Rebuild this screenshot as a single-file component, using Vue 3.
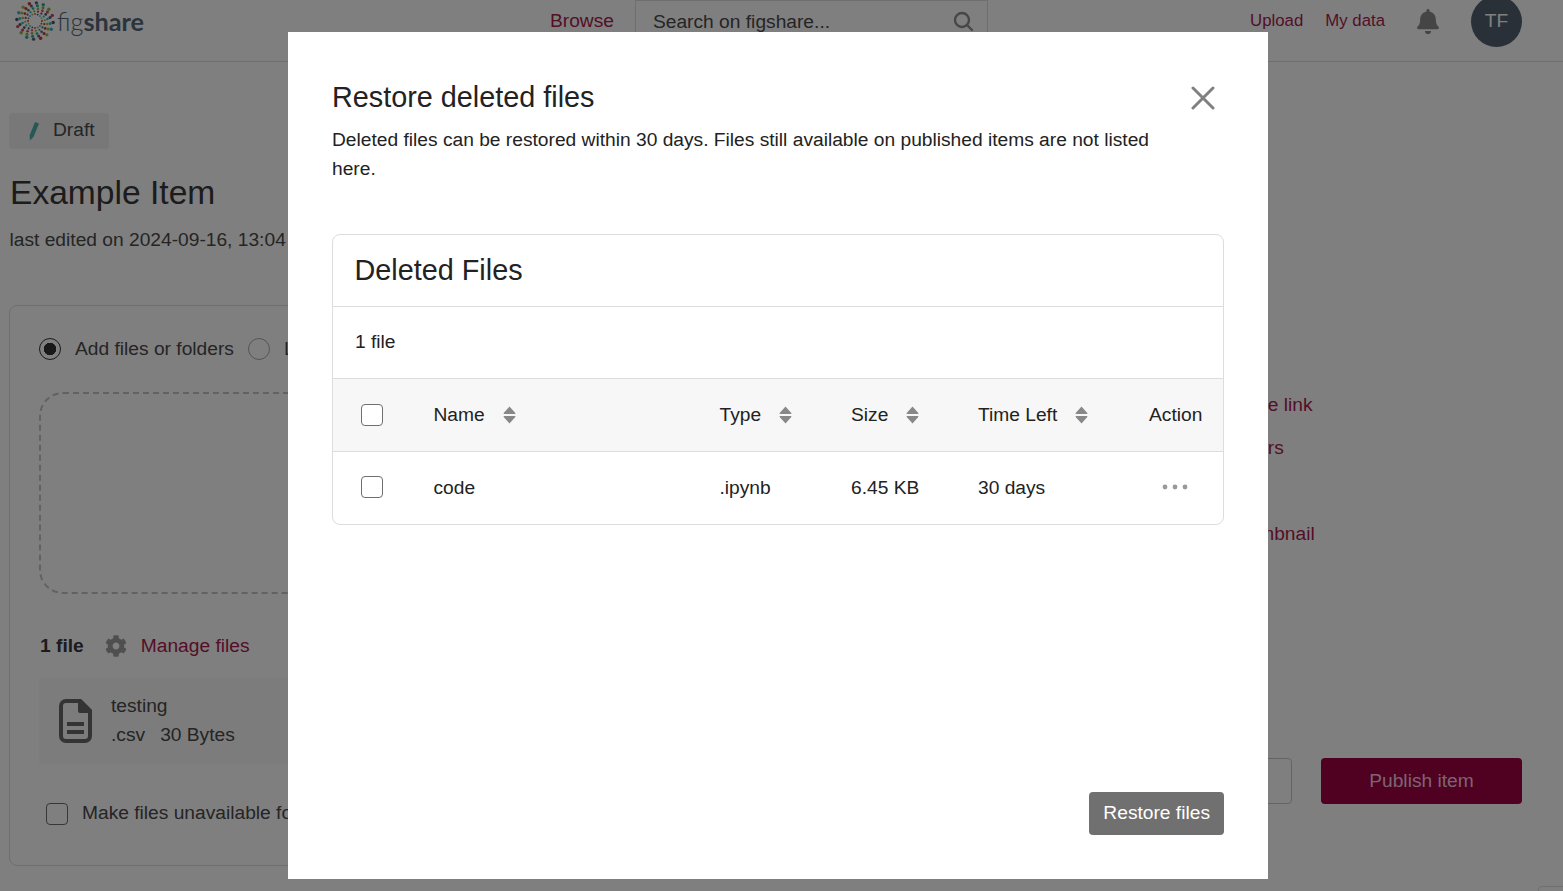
<template>
  <div class="page">
    <header class="topbar">
      <div class="logo">
        <svg class="logo-mark" viewBox="0 0 40 40" width="40" height="40">
          <circle
            v-for="(dot, i) in logoDots"
            :key="i"
            :cx="dot.x"
            :cy="dot.y"
            :r="dot.r"
            :fill="dot.color"
          />
        </svg>
        <span class="logo-text">fig<b>share</b></span>
      </div>
      <a class="link browse">Browse</a>
      <div class="search">
        <span>Search on figshare...</span>
        <svg viewBox="0 0 20 20" width="20" height="20" fill="none" stroke="#8f8f8f" stroke-width="2.4">
          <circle cx="9" cy="9" r="7" />
          <path d="M14 14l5 5" stroke-linecap="round" />
        </svg>
      </div>
      <a class="link upload">Upload</a>
      <a class="link mydata">My data</a>
      <svg class="bell" viewBox="0 0 448 512" width="22" height="25" fill="#8a8a8a">
        <path d="M224 512c35.32 0 63.97-28.65 63.97-64H160.03c0 35.35 28.65 64 63.97 64zm215.39-149.71c-19.32-20.76-55.47-51.99-55.47-154.29 0-77.7-54.48-139.9-127.94-155.16V32c0-17.67-14.32-32-31.98-32s-31.98 14.33-31.98 32v20.84C118.56 68.1 64.08 130.3 64.08 208c0 102.3-36.15 133.53-55.47 154.29-6 6.45-8.66 14.16-8.61 21.71.11 16.4 12.98 32 32.1 32h383.8c19.12 0 32-15.6 32.1-32 .05-7.55-2.61-15.27-8.61-21.71z" />
      </svg>
      <div class="avatar"><span>TF</span></div>
    </header>

    <main class="content">
      <section class="left">
        <div class="tag">
          <svg viewBox="0 0 12 20" width="12" height="20" fill="#4cb0aa">
            <path d="M7 1l4 1.500L5.500 16 2 19.500 1.600 14.500z" />
          </svg>
          <span>Draft</span>
        </div>
        <h1 class="item-title">Example Item</h1>
        <p class="edited">last edited on 2024-09-16, 13:04</p>

        <div class="files-card">
          <div class="radios">
            <span class="radio on"></span>
            <span>Add files or folders</span>
            <span class="radio"></span>
            <span>Link to files</span>
          </div>
          <div class="dropzone"></div>
          <div class="manage">
            <b>1 file</b>
            <svg viewBox="0 0 512 512" width="22" height="22" fill="#9e9e9e">
              <path d="M487.4 315.7l-42.6-24.6c4.3-23.2 4.3-47 0-70.2l42.6-24.6c4.9-2.8 7.1-8.6 5.5-14-11.1-35.6-30-67.8-54.7-94.6-3.8-4.1-10-5.1-14.8-2.3L380.8 110c-17.9-15.4-38.5-27.3-60.8-35.1V25.8c0-5.6-3.9-10.5-9.4-11.7-36.7-8.2-74.3-7.8-109.2 0-5.5 1.2-9.4 6.1-9.4 11.7V75c-22.2 7.9-42.8 19.8-60.8 35.1L88.7 85.5c-4.9-2.8-11-1.9-14.8 2.3-24.7 26.7-43.6 58.9-54.7 94.6-1.7 5.4.6 11.2 5.5 14L67.3 221c-4.3 23.2-4.3 47 0 70.2l-42.6 24.6c-4.9 2.8-7.1 8.6-5.5 14 11.1 35.6 30 67.8 54.7 94.6 3.8 4.1 10 5.1 14.8 2.3l42.6-24.6c17.9 15.4 38.5 27.3 60.8 35.1v49.2c0 5.6 3.9 10.5 9.4 11.7 36.7 8.2 74.3 7.8 109.2 0 5.5-1.2 9.4-6.1 9.4-11.7v-49.2c22.2-7.9 42.8-19.8 60.8-35.1l42.6 24.6c4.9 2.8 11 1.9 14.8-2.3 24.7-26.7 43.6-58.9 54.7-94.6 1.5-5.5-.7-11.3-5.6-14.1zM256 336c-44.1 0-80-35.9-80-80s35.9-80 80-80 80 35.9 80 80-35.9 80-80 80z" />
            </svg>
            <a class="link">Manage files</a>
          </div>
          <div class="file-row">
            <svg viewBox="0 0 33 44" width="33" height="44" fill="none" stroke="#686868" stroke-width="4">
              <path d="M7 2h14l10 10v25a5 5 0 0 1-5 5H7a5 5 0 0 1-5-5V7a5 5 0 0 1 5-5z" stroke-linejoin="round" />
              <path d="M21 2v10h10z" fill="#686868" stroke-linejoin="round" />
              <path d="M8 25h17M8 33h17" />
            </svg>
            <div class="file-text">
              <div>testing</div>
              <div class="file-meta"><span>.csv</span><span>30 Bytes</span></div>
            </div>
          </div>
          <div class="unavailable">
            <span class="check dim"></span>
            <span class="unavailable-text">Make files unavailable for download</span>
          </div>
        </div>
      </section>

      <aside class="right">
        <a class="link">Generate private link</a>
        <a class="link">Edit collaborators</a>
        <a class="link thumb">Upload file thumbnail</a>
        <div class="actions">
          <button class="save" type="button">Save</button>
          <button class="publish" type="button"><span>Publish item</span></button>
        </div>
      </aside>
    </main>

    <div class="corner-box"></div>

    <div class="overlay">
      <div class="modal">
        <svg class="close" viewBox="0 0 24 24" width="24" height="24" stroke="#808080" stroke-width="3" stroke-linecap="round">
          <path d="M2 2l20 20M22 2L2 22" />
        </svg>
        <h2 class="modal-title">Restore deleted files</h2>
        <p class="modal-desc">
          Deleted files can be restored within 30 days. Files still available on
          published items are not listed here.
        </p>

        <div class="deleted-card">
          <h3 class="card-title">Deleted Files</h3>
          <div class="count">1 file</div>
          <div class="table-row table-head">
            <span class="check"></span>
            <span v-for="col in sortColumns" :key="col" class="th">
              {{ col }}
              <svg viewBox="0 0 12 17" width="13" height="18" fill="#888">
                <path d="M6 .5L11.5 6.500a.6.6 0 0 1-.4 1H.9a.6.6 0 0 1-.4-1zM6 16.500L.5 10.500a.6.6 0 0 1 .4-1h10.200a.6.6 0 0 1 .4 1z" />
              </svg>
            </span>
            <span>Action</span>
          </div>
          <div v-for="file in deletedFiles" :key="file.name" class="table-row table-body">
            <span class="check"></span>
            <span>{{ file.name }}</span>
            <span>{{ file.type }}</span>
            <span>{{ file.size }}</span>
            <span>{{ file.left }}</span>
            <svg class="dots" viewBox="0 0 26 6" width="26" height="6" fill="#999">
              <circle cx="3" cy="3" r="2.400" />
              <circle cx="13" cy="3" r="2.400" />
              <circle cx="23" cy="3" r="2.400" />
            </svg>
          </div>
        </div>

        <button class="restore" type="button"><span>Restore files</span></button>
      </div>
    </div>
  </div>
</template>

<script setup>
const sortColumns = ["Name", "Type", "Size", "Time Left"];
const deletedFiles = [
  { name: "code", type: ".ipynb", size: "6.45 KB", left: "30 days" },
];

// the logo is a swirl of coloured dots
const armColors = ["#c0392b", "#566573", "#2aa9a9", "#8bb63a", "#d2455c", "#4a5865", "#3cb4c4", "#a4b83c"];
const logoDots = [];
for (let arm = 0; arm < 16; arm++) {
  for (let step = 0; step < 5; step++) {
    const radius = 7 + step * 2.8;
    const angle = ((arm * 22.5 + step * 18) * Math.PI) / 180;
    logoDots.push({
      x: 20 + radius * Math.cos(angle),
      y: 20 + radius * Math.sin(angle),
      r: 0.9 + step * 0.2,
      color: armColors[arm % armColors.length],
    });
  }
}
</script>

<style>
body {
  overflow: hidden;
  background: #fff;
}
</style>

<style scoped>
.page {
  height: 891px;
  overflow: hidden;
  font-family: "Liberation Sans", Arial, sans-serif;
  font-size: 19.2px;
  line-height: 29px;
  color: #4a4a4a;
}
.link {
  color: #a81c50;
}
.topbar {
  display: flex;
  align-items: center;
  box-sizing: border-box;
  height: 62px;
  padding: 0 41px 19px 15px;
  border-bottom: 1px solid #dedede;
}
.logo {
  display: flex;
  align-items: center;
  width: 128px;
}
.logo-mark {
  flex-shrink: 0;
}
.logo-text {
  margin-left: 2px;
  font-family: Lato, sans-serif;
  font-size: 25.2px;
  font-weight: 300;
  color: #56687a;
}
.logo-text b {
  font-weight: 700;
}
.browse,
.upload,
.mydata {
  padding-bottom: 2px;
}
.browse {
  margin-left: 407px;
}
.search {
  display: flex;
  align-items: center;
  justify-content: space-between;
  box-sizing: border-box;
  width: 353px;
  height: 42px;
  margin-left: 21px;
  padding: 0 14px 0 17px;
  border: 1px solid #dedede;
}
.upload {
  margin-left: auto;
  font-size: 16.8px;
}
.mydata {
  margin-left: 22px;
  font-size: 16.8px;
}
.bell {
  margin-left: 32px;
}
.avatar {
  display: flex;
  flex-shrink: 0;
  align-items: center;
  justify-content: center;
  width: 51px;
  height: 51px;
  margin-left: 32px;
  border-radius: 50%;
  background: #52606e;
  color: #fff;
}
.avatar span {
  padding-bottom: 2px;
}
.content {
  display: flex;
  padding: 0 41px 0 9px;
}
.left {
  width: 1076.5px;
  margin-right: 50px;
}
.right {
  display: flex;
  flex-direction: column;
  gap: 14px;
  width: 386.5px;
  padding-top: 328px;
}
.thumb {
  margin-top: 43px;
}
.tag {
  display: flex;
  align-items: center;
  gap: 13px;
  box-sizing: border-box;
  width: 100px;
  height: 36px;
  margin-top: 51px;
  padding-left: 19px;
  border-radius: 4px;
  background: #f0f0f0;
}
.tag span {
  padding-bottom: 3px;
}
.item-title {
  margin: 24px 0 0 1px;
  font-size: 33.6px;
  font-weight: 400;
  line-height: 40px;
  color: #383838;
}
.edited {
  margin: 12px 0 0 0.5px;
}
.files-card {
  box-sizing: border-box;
  margin-top: 51px;
  padding: 28px 29px 37px;
  border: 1px solid #dedede;
  border-radius: 8px;
}
.radios {
  display: flex;
  align-items: center;
  gap: 14px;
}
.radio {
  box-sizing: border-box;
  width: 22px;
  height: 22px;
  border: 1px solid #aaa;
  border-radius: 50%;
}
.radio.on {
  border-color: #333;
  background: radial-gradient(circle, #333 0 6px, transparent 6.5px);
}
.dropzone {
  box-sizing: border-box;
  height: 202px;
  margin-top: 29px;
  border: 2px dashed #c4c4c4;
  border-radius: 24px;
}
.manage {
  display: flex;
  align-items: center;
  gap: 22px;
  margin-top: 37px;
  padding-left: 1px;
}
.manage b {
  margin-right: -1px;
  color: #383838;
}
.manage .link {
  margin-left: -8px;
}
.file-row {
  display: flex;
  align-items: center;
  gap: 19px;
  height: 86px;
  margin-top: 18px;
  padding-left: 20px;
  background: #f8f8f8;
}
.file-text {
  padding-bottom: 2px;
}
.file-meta {
  display: flex;
  gap: 15px;
}
.unavailable {
  display: flex;
  align-items: center;
  gap: 14px;
  height: 29px;
  margin-top: 35px;
  padding-left: 7px;
}
.unavailable-text {
  padding-bottom: 2px;
}
.check {
  display: block;
  box-sizing: border-box;
  width: 22px;
  height: 22px;
  margin-left: 28px;
  border: 1.5px solid #6f6f6f;
  border-radius: 4px;
  background: #fff;
}
.check.dim {
  margin-left: 0;
  background: none;
}
.actions {
  display: flex;
  gap: 29px;
  margin-top: 196px;
}
.actions button {
  height: 46px;
  border-radius: 4px;
  font: inherit;
}
.save {
  width: 156.5px;
  border: 1px solid #c8c8c8;
  background: #fff;
}
.publish {
  width: 201px;
  border: 0;
  background: #a00040;
  color: #f4cae0;
}
.publish span,
.restore span {
  position: relative;
  top: -1px;
}
.corner-box {
  position: fixed;
  top: 886px;
  left: 1538px;
  width: 60px;
  height: 40px;
  border: 1px solid #dedede;
  border-radius: 4px;
}

.overlay {
  position: fixed;
  inset: 0;
  background: rgba(0, 0, 0, 0.5);
}
.modal {
  position: relative;
  display: flex;
  flex-direction: column;
  box-sizing: border-box;
  width: 980px;
  height: 847px;
  margin: 32px 0 0 288px;
  padding: 48px 44px 44px;
  background: #fff;
  color: #222;
}
.close {
  position: absolute;
  top: 54px;
  right: 53px;
}
.modal-title {
  margin: 0;
  font-size: 28.8px;
  font-weight: 400;
  line-height: 34px;
}
.modal-desc {
  width: 840px;
  margin: 11px 0 0;
  line-height: 29px;
}
.deleted-card {
  margin-top: 51px;
  border: 1px solid #ddd;
  border-radius: 8px;
  overflow: hidden;
}
.card-title {
  box-sizing: border-box;
  height: 72px;
  margin: 0;
  padding: 0 21.5px;
  border-bottom: 1px solid #ddd;
  font-size: 28.8px;
  font-weight: 400;
  line-height: 70px;
}
.count {
  box-sizing: border-box;
  height: 71px;
  padding: 0 22px;
  line-height: 70px;
}
.table-row {
  display: grid;
  grid-template-columns: 100.5px 286px 131.5px 127px 171px 1fr;
  align-items: center;
  box-sizing: border-box;
  height: 73px;
  padding-bottom: 1px;
  border-top: 1px solid #ddd;
}
.table-body {
  padding-bottom: 2px;
}
.table-head {
  background: #f7f7f7;
}
.th {
  display: flex;
  align-items: center;
  gap: 18px;
}
.dots {
  margin-left: 13px;
}
.restore {
  align-self: flex-end;
  height: 43px;
  margin-top: auto;
  padding: 0 14px;
  border: 0;
  border-radius: 4px;
  background: #707070;
  color: #fff;
  font: inherit;
}
</style>
